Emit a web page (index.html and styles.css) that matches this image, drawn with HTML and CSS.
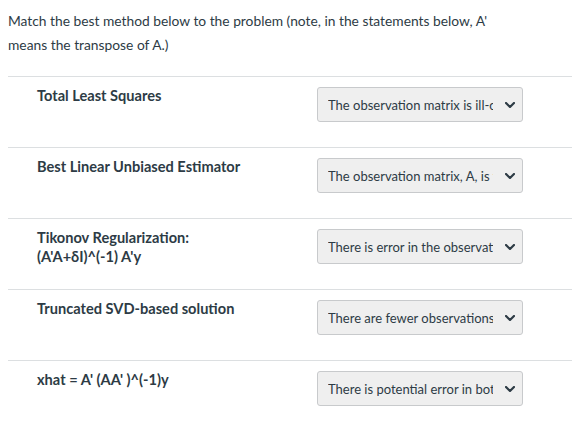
FILE: index.html
```html
<!DOCTYPE html>
<html>
<head>
<meta charset="utf-8">
<link rel="stylesheet" href="styles.css">
</head>
<body>
<div class="question">
  <p class="prompt">Match the best method below to the problem (note, in the statements below, A' means the transpose of A.)</p>
  <div class="answers">
    <div class="row">
      <div class="label">Total Least Squares</div>
      <div class="select"><span class="value">The observation matrix is ill-conditioned</span><svg class="chev" width="10" height="6" viewBox="0 0 10 6"><polyline points="1,1 5,5 9,1" /></svg></div>
    </div>
    <div class="row">
      <div class="label">Best Linear Unbiased Estimator</div>
      <div class="select"><span class="value">The observation matrix, A, is full rank</span><svg class="chev" width="10" height="6" viewBox="0 0 10 6"><polyline points="1,1 5,5 9,1" /></svg></div>
    </div>
    <div class="row">
      <div class="label">Tikonov Regularization:<br>(A'A+δI)^(-1) A'y</div>
      <div class="select"><span class="value">There is error in the observation matrix</span><svg class="chev" width="10" height="6" viewBox="0 0 10 6"><polyline points="1,1 5,5 9,1" /></svg></div>
    </div>
    <div class="row">
      <div class="label">Truncated SVD-based solution</div>
      <div class="select"><span class="value">There are fewer observations than unknowns</span><svg class="chev" width="10" height="6" viewBox="0 0 10 6"><polyline points="1,1 5,5 9,1" /></svg></div>
    </div>
    <div class="row">
      <div class="label">xhat = A' (AA' )^(-1)y</div>
      <div class="select"><span class="value">There is potential error in both</span><svg class="chev" width="10" height="6" viewBox="0 0 10 6"><polyline points="1,1 5,5 9,1" /></svg></div>
    </div>
  </div>
</div>
</body>
</html>
```

FILE: styles.css
```css
html, body {
  margin: 0;
  padding: 0;
  background: #ffffff;
}
body {
  font-family: Lato, "Noto Sans", sans-serif;
  color: #2d3b45;
  overflow: hidden;
}
.question {
  padding-left: 8px;
}
.prompt {
  box-sizing: border-box;
  margin: 0;
  padding-top: 9px;
  width: 520px;
  font-size: 13.8px;
  line-height: 23.5px;
  height: 76px;
}
.row {
  border-top: 1px solid #dcdfe1;
  display: flex;
  align-items: flex-start;
  padding: 10px 0 0 29px;
}
.label {
  width: 280px;
  font-weight: bold;
  font-size: 14.6px;
  line-height: 19px;
  margin-top: -1px;
}
.select {
  box-sizing: border-box;
  width: 206px;
  height: 35px;
  margin-bottom: 25px;
  background: #efefef;
  border: 1px solid #c8cacc;
  border-radius: 3px;
  display: flex;
  align-items: center;
  padding: 0 7px 0 10px;
  font-size: 13px;
}
.value {
  flex: 1;
  white-space: nowrap;
  overflow: hidden;
  margin-right: 12px;
}
.chev {
  display: block;
  fill: none;
  stroke: #2d3b45;
  stroke-width: 2.2;
  stroke-linecap: round;
  stroke-linejoin: round;
}
```
